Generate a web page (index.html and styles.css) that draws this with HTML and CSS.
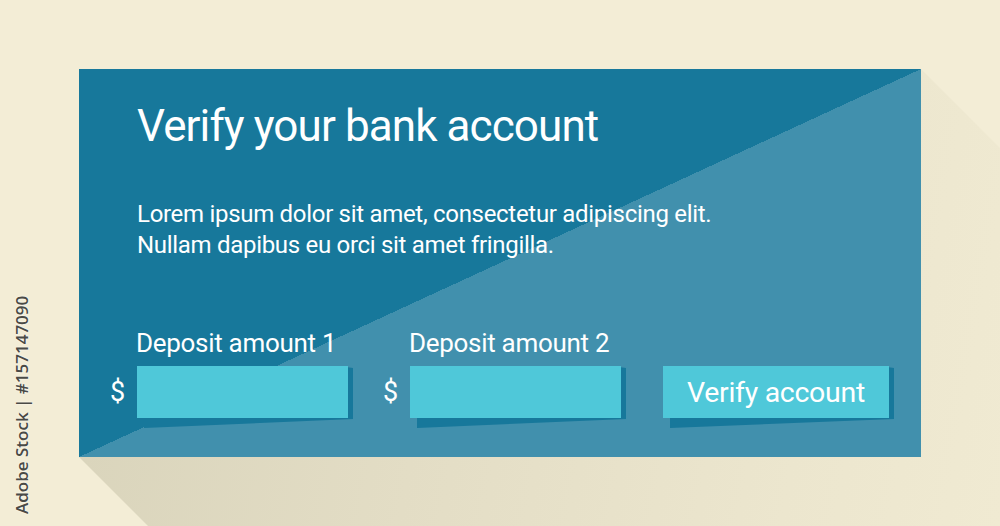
FILE: index.html
```html
<!DOCTYPE html>
<html>
<head>
<meta charset="utf-8">
<link rel="stylesheet" href="styles.css">
</head>
<body>
<div class="page">
  <div class="long-shadow"></div>
  <div class="card">
    <h1 class="title">Verify your bank account</h1>
    <p class="lead">Lorem ipsum dolor sit amet, consectetur adipiscing elit.<br>Nullam dapibus eu orci sit amet fringilla.</p>
    <div class="form">
      <div class="group">
        <span class="label">Deposit amount 1</span>
        <span class="cur">$</span>
        <div class="input"></div>
      </div>
      <div class="group">
        <span class="label">Deposit amount 2</span>
        <span class="cur">$</span>
        <div class="input"></div>
      </div>
      <button class="btn">Verify account</button>
    </div>
  </div>
  <div class="stock">Adobe Stock | #157147090</div>
</div>
</body>
</html>
```
FILE: styles.css
```css
* { box-sizing: border-box; }
html, body { margin: 0; padding: 0; }
body {
  background: #f3edd6;
  font-family: Roboto, "Noto Sans", sans-serif;
  color: #fff;
}
.page {
  position: relative;
  width: 1000px;
  height: 526px;
  overflow: hidden;
  padding: 69px 0 0 79px;
}
.long-shadow {
  position: absolute;
  inset: 0;
  clip-path: polygon(921px 69px, 1000px 148px, 1000px 526px, 148px 526px, 79px 457px);
  background: linear-gradient(100deg, #d8d3ba 8%, #e3ddc5 45%, #ece6ce 80%, #f0ead2 100%);
}
.card {
  position: relative;
  z-index: 0;
  isolation: isolate;
  width: 842px;
  height: 388px;
  padding: 30px 0 0 58px;
  background: linear-gradient(to bottom right, #17789b 50%, #4190ad 50%);
}
.title {
  margin: 0;
  font-weight: 400;
  font-size: 44px;
  line-height: 54px;
  letter-spacing: -0.9px;
}
.lead {
  margin: 46px 0 0;
  font-size: 24px;
  line-height: 31px;
  letter-spacing: -0.3px;
}
.form {
  display: flex;
  align-items: flex-end;
  margin: 67px 0 0 -27px;
}
.group {
  display: grid;
  grid-template-columns: 27px 211px;
  grid-template-rows: auto 52px;
  row-gap: 8px;
  margin-right: 35px;
}
.group + .group { margin-right: 42px; }
.label {
  grid-column: 2 / span 1;
  white-space: nowrap;
  font-size: 26px;
  line-height: 30px;
  letter-spacing: -0.3px;
  margin-left: -1px;
}
.cur {
  grid-column: 1;
  grid-row: 2;
  align-self: center;
  font-size: 27px;
  line-height: 30px;
}
.input, .btn {
  position: relative;
  height: 52px;
  background: #4fc8d9;
}
.input::before, .btn::before {
  content: "";
  position: absolute;
  top: 0;
  left: 0;
  right: -6px;
  bottom: -10px;
  z-index: -1;
  background: #17789b;
  clip-path: polygon(calc(100% - 8px) 1px, calc(100% - 1px) 2px, calc(100% - 1px) calc(100% - 9px), 7px 100%, 7px calc(100% - 12px));
}
.btn {
  width: 226px;
  border: 0;
  padding: 0;
  color: #fff;
  font-family: inherit;
  font-size: 28.5px;
  letter-spacing: -0.3px;
  cursor: pointer;
}
.stock {
  position: absolute;
  left: 10px;
  top: 294px;
  height: 222px;
  writing-mode: vertical-rl;
  transform: rotate(180deg);
  font-family: "Open Sans", sans-serif;
  font-size: 17px;
  font-weight: 600;
  color: #4a4a45;
  text-align: center;
  text-shadow: 0 0 2px #fff;
}
```
